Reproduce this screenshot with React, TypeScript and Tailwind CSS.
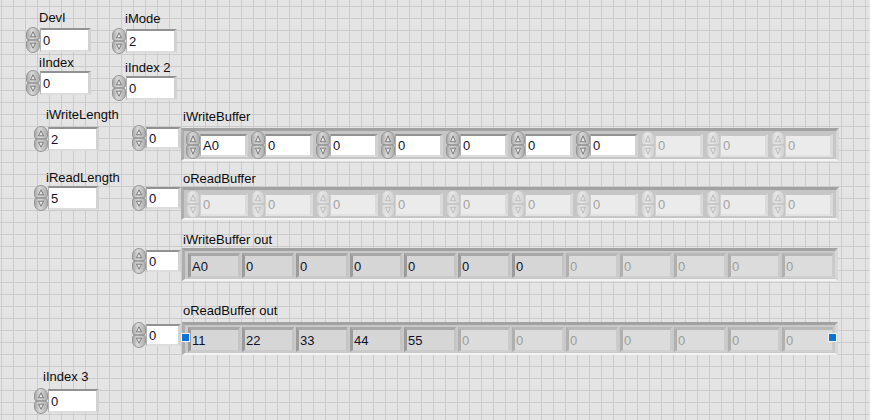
import React from "react";

// LabVIEW-style front panel: numeric controls and arrays on a gridded canvas.

type Tone = "on" | "off";

function Spinner({ h, off = false }: { h: number; off?: boolean }) {
  const mid = h / 2;
  const id = off ? "spin-off" : "spin-on";
  const edge = off ? "#c6c6c6" : "#979797";
  const arrow = off ? "#b8b8b8" : "#6f6f6f";
  const top = `M0.5 7 A6.5 6.5 0 0 1 13.5 7 L13.5 ${mid - 2.5} Q13.5 ${mid - 0.3} 11 ${mid - 0.3} L3 ${mid - 0.3} Q0.5 ${mid - 0.3} 0.5 ${mid - 2.5} Z`;
  const bot = `M0.5 ${h - 7} A6.5 6.5 0 0 0 13.5 ${h - 7} L13.5 ${mid + 2.5} Q13.5 ${mid + 0.3} 11 ${mid + 0.3} L3 ${mid + 0.3} Q0.5 ${mid + 0.3} 0.5 ${mid + 2.5} Z`;
  return (
    <svg width="14" height={h} viewBox={`0 0 14 ${h}`} className="block shrink-0">
      <defs>
        <linearGradient id={id} x1="0" x2="1" y1="0" y2="0">
          <stop offset="0" stopColor={off ? "#d2d2d2" : "#a4a4a4"} />
          <stop offset="0.4" stopColor={off ? "#e8e8e8" : "#d9d9d9"} />
          <stop offset="1" stopColor={off ? "#d0d0d0" : "#ababab"} />
        </linearGradient>
      </defs>
      <path d={top} fill={`url(#${id})`} stroke={edge} />
      <path d={bot} fill={`url(#${id})`} stroke={edge} />
      <path
        d={`M7 4.8 L9.5 ${mid - 3.2} L4.5 ${mid - 3.2} Z`}
        fill={off ? "#e2e2e2" : "#e6e6e6"}
        stroke={arrow}
        strokeWidth="0.9"
        strokeLinejoin="round"
      />
      <path
        d={`M7 ${h - 4.8} L9.5 ${mid + 3.2} L4.5 ${mid + 3.2} Z`}
        fill={off ? "#e2e2e2" : "#e6e6e6"}
        stroke={arrow}
        strokeWidth="0.9"
        strokeLinejoin="round"
      />
    </svg>
  );
}

function Field({ value, tone, size }: { value: string; tone: Tone; size: "std" | "idx" | "arr" }) {
  const dims =
    size === "std" ? "w-[51px] h-[24px]" : size === "idx" ? "w-[35px] h-[22px]" : "w-[48px] h-[23px]";
  const look =
    tone === "on"
      ? "bg-white border-t-[#929292] border-l-[#b2b2b2] border-r-[#d2d2d2] border-b-[#dddddd] text-[#10102a]"
      : "bg-[#ebebeb] border-t-[#c6c6c6] border-l-[#d0d0d0] border-r-[#dadada] border-b-[#e2e2e2] text-[#a2a2a2]";
  return (
    <div
      className={`${dims} ${look} flex items-center border-t-2 border-l border-r-[3px] border-b-2 pl-[2px] text-[13px] leading-none`}
    >
      {value}
    </div>
  );
}

function Cell({ value, tone }: { value: string; tone: Tone }) {
  const look =
    tone === "on"
      ? "bg-[#d6d6d6] border-l-[#9c9c9c] border-t-[#a8a8a8] border-r-[#c4c4c4] border-b-[#cacaca] text-[#10102a]"
      : "bg-[#dcdcdc] border-l-[#b0b0b0] border-t-[#b8b8b8] border-r-[#cbcbcb] border-b-[#d0d0d0] text-[#9c9c9c]";
  return (
    <div
      className={`${look} flex h-[25px] w-[52px] items-center border-l-[3px] border-t-[3px] border-r-2 border-b-2 pl-[1px] text-[13px] leading-none`}
    >
      {value}
    </div>
  );
}

const numerics = [
  { label: "DevI", value: "0", pos: "left-[26px] top-[10px]", pad: "pl-[13px]", gap: "mt-[2px]" },
  { label: "iMode", value: "2", pos: "left-[112px] top-[11px]", pad: "pl-[13px]", gap: "mt-[2px]" },
  { label: "iIndex", value: "0", pos: "left-[26px] top-[55px]", pad: "pl-[13px]", gap: "mt-0" },
  { label: "iIndex 2", value: "0", pos: "left-[112px] top-[60px]", pad: "pl-[13px]", gap: "mt-0" },
  { label: "iWriteLength", value: "2", pos: "left-[34px] top-[107px]", pad: "pl-[12px]", gap: "mt-[4px]" },
  { label: "iReadLength", value: "5", pos: "left-[34px] top-[170px]", pad: "pl-[12px]", gap: "mt-0" },
  { label: "iIndex 3", value: "0", pos: "left-[34px] top-[369px]", pad: "pl-[9px]", gap: "mt-[4px]" },
];

const writeBuffer = ["A0", "0", "0", "0", "0", "0", "0", "0", "0", "0"];
const readBuffer = ["0", "0", "0", "0", "0", "0", "0", "0", "0", "0"];
const writeOut = ["A0", "0", "0", "0", "0", "0", "0", "0", "0", "0", "0", "0"];
const readOut = ["11", "22", "33", "44", "55", "0", "0", "0", "0", "0", "0", "0"];

const LABEL = "whitespace-nowrap text-[13px] leading-[15px] text-[#0c0c0c]";

function NumericControl({ label, value, pos, pad, gap }: (typeof numerics)[number]) {
  return (
    <div className={`absolute ${pos} flex flex-col`}>
      <div className={`${LABEL} ${pad}`}>{label}</div>
      <div className={`${gap} flex items-center`}>
        <Spinner h={26} />
        <Field value={value} tone="on" size="std" />
      </div>
    </div>
  );
}

function IndexControl() {
  return (
    <div className="flex shrink-0 items-center">
      <Spinner h={26} />
      <Field value="0" tone="on" size="idx" />
    </div>
  );
}

function ControlArray({
  label,
  items,
  active,
  pos,
  rowGap,
  frameGap,
}: {
  label: string;
  items: string[];
  active: number;
  pos: string;
  rowGap: string;
  frameGap: string;
}) {
  return (
    <div className={`absolute ${pos} flex flex-col`}>
      <div className={`${LABEL} pl-[51px]`}>{label}</div>
      <div className={`${rowGap} flex items-start`}>
        <IndexControl />
        <div
          className={`${frameGap} flex h-[33px] w-[658px] items-center gap-[3px] border-t-[3px] border-l-[3px] border-r-[3px] border-b-2 border-t-[#a2a2a2] border-l-[#aeaeae] border-r-[#d8d8d8] border-b-[#f3f3f3] bg-[#c6c6c6] pl-[2px]`}
        >
          {items.map((v, i) => (
            <div key={i} className="flex items-center">
              <Spinner h={28} off={i >= active} />
              <Field value={v} tone={i < active ? "on" : "off"} size="arr" />
            </div>
          ))}
        </div>
      </div>
    </div>
  );
}

function IndicatorArray({
  label,
  items,
  active,
  pos,
  rowGap,
  markers = false,
}: {
  label: string;
  items: string[];
  active: number;
  pos: string;
  rowGap: string;
  markers?: boolean;
}) {
  return (
    <div className={`absolute ${pos} flex flex-col`}>
      <div className={`${LABEL} pl-[51px]`}>{label}</div>
      <div className={`${rowGap} flex items-start`}>
        <IndexControl />
        <div className="relative ml-px flex h-[33px] w-[656px] items-start gap-[2px] border-t-[3px] border-l-[3px] border-r-[3px] border-b-2 border-t-[#a2a2a2] border-l-[#aeaeae] border-r-[#d8d8d8] border-b-[#f3f3f3] bg-[#c9c9c9] pl-[3px] pt-[2px]">
          {items.map((v, i) => (
            <Cell key={i} value={v} tone={i < active ? "on" : "off"} />
          ))}
          {markers && (
            <>
              <span className="absolute left-[-4px] top-[8px] h-[9px] w-[9px] border border-[#f4f4f4] bg-[#0a74d6]" />
              <span className="absolute right-[-2px] top-[8px] h-[9px] w-[9px] border border-[#f4f4f4] bg-[#0a74d6]" />
            </>
          )}
        </div>
      </div>
    </div>
  );
}

export default function App() {
  return (
    <div className="relative h-[420px] w-[870px] overflow-hidden bg-[#e4e4e4] bg-[linear-gradient(to_right,#cbcbcb_1px,transparent_1px),linear-gradient(to_bottom,#cbcbcb_1px,transparent_1px)] font-['Liberation_Sans',Arial,sans-serif] [background-position:1px_6px] [background-size:12px_12px]">
      {numerics.map((n) => (
        <NumericControl key={n.label} {...n} />
      ))}

      <ControlArray
        label="iWriteBuffer"
        items={writeBuffer}
        active={7}
        pos="left-[132px] top-[109px]"
        rowGap="mt-px"
        frameGap="mt-[3px]"
      />
      <ControlArray
        label="oReadBuffer"
        items={readBuffer}
        active={0}
        pos="left-[132px] top-[171px]"
        rowGap="-mt-px"
        frameGap="mt-[2px]"
      />

      <IndicatorArray
        label="iWriteBuffer out"
        items={writeOut}
        active={7}
        pos="left-[132px] top-[232px]"
        rowGap="mt-px"
      />
      <IndicatorArray
        label="oReadBuffer out"
        items={readOut}
        active={5}
        pos="left-[132px] top-[303px]"
        rowGap="mt-[4px]"
        markers
      />
    </div>
  );
}
